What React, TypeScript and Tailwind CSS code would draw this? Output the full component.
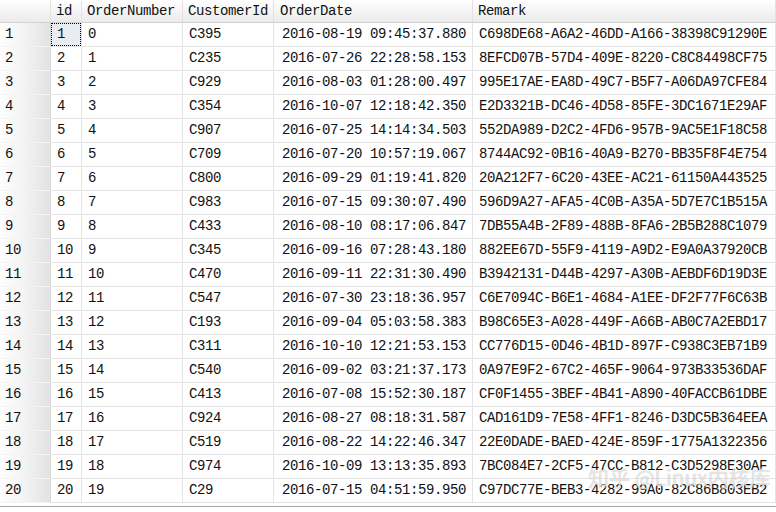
const rows: [string, string, string][] = [
  ['C395', '2016-08-19 09:45:37.880', 'C698DE68-A6A2-46DD-A166-38398C91290E'],
  ['C235', '2016-07-26 22:28:58.153', '8EFCD07B-57D4-409E-8220-C8C84498CF75'],
  ['C929', '2016-08-03 01:28:00.497', '995E17AE-EA8D-49C7-B5F7-A06DA97CFE84'],
  ['C354', '2016-10-07 12:18:42.350', 'E2D3321B-DC46-4D58-85FE-3DC1671E29AF'],
  ['C907', '2016-07-25 14:14:34.503', '552DA989-D2C2-4FD6-957B-9AC5E1F18C58'],
  ['C709', '2016-07-20 10:57:19.067', '8744AC92-0B16-40A9-B270-BB35F8F4E754'],
  ['C800', '2016-09-29 01:19:41.820', '20A212F7-6C20-43EE-AC21-61150A443525'],
  ['C983', '2016-07-15 09:30:07.490', '596D9A27-AFA5-4C0B-A35A-5D7E7C1B515A'],
  ['C433', '2016-08-10 08:17:06.847', '7DB55A4B-2F89-488B-8FA6-2B5B288C1079'],
  ['C345', '2016-09-16 07:28:43.180', '882EE67D-55F9-4119-A9D2-E9A0A37920CB'],
  ['C470', '2016-09-11 22:31:30.490', 'B3942131-D44B-4297-A30B-AEBDF6D19D3E'],
  ['C547', '2016-07-30 23:18:36.957', 'C6E7094C-B6E1-4684-A1EE-DF2F77F6C63B'],
  ['C193', '2016-09-04 05:03:58.383', 'B98C65E3-A028-449F-A66B-AB0C7A2EBD17'],
  ['C311', '2016-10-10 12:21:53.153', 'CC776D15-0D46-4B1D-897F-C938C3EB71B9'],
  ['C540', '2016-09-02 03:21:37.173', '0A97E9F2-67C2-465F-9064-973B33536DAF'],
  ['C413', '2016-07-08 15:52:30.187', 'CF0F1455-3BEF-4B41-A890-40FACCB61DBE'],
  ['C924', '2016-08-27 08:18:31.587', 'CAD161D9-7E58-4FF1-8246-D3DC5B364EEA'],
  ['C519', '2016-08-22 14:22:46.347', '22E0DADE-BAED-424E-859F-1775A1322356'],
  ['C974', '2016-10-09 13:13:35.893', '7BC084E7-2CF5-47CC-B812-C3D5298E30AF'],
  ['C29', '2016-07-15 04:51:59.950', 'C97DC77E-BEB3-4282-99A0-82C86B803EB2'],
];

const cols = 'grid grid-cols-[51px_31px_101px_91px_199px_1fr]';
const headCell =
  'h-[23px] flex items-center pl-[5px] border-r border-b border-r-[#e2e2e2] border-b-[#d2d2d2] bg-gradient-to-b from-white to-[#ebebeb] whitespace-nowrap overflow-hidden';
const cell =
  'h-6 flex items-center pl-[6px] border-r border-b border-[#e4e4e4] whitespace-nowrap overflow-hidden';

export default function App() {
  return (
    <main
      className="relative w-[776px] h-[512px] overflow-hidden bg-white text-[#111] text-[14px] tracking-[-0.4px]"
      style={{ fontFamily: '"Liberation Mono", "DejaVu Sans Mono", monospace' }}
    >
      {/* Header */}
      <div className={cols}>
        <div className={headCell} />
        <div className={headCell}>id</div>
        <div className={headCell}>OrderNumber</div>
        <div className={headCell}>CustomerId</div>
        <div className={`${headCell} pl-[6px]`}>OrderDate</div>
        <div className={headCell}>Remark</div>
      </div>

      {/* Rows */}
      {rows.map(([customer, date, remark], i) => (
        <div key={i} className={cols}>
          <div className="h-6 flex items-center pl-[5px] border-r border-b border-r-[#d8d8d8] border-b-[#f4f4f4] bg-gradient-to-r from-[#fdfdfd] via-[#f3f3f3] to-[#e2e2e2]">
            {i + 1}
          </div>
          {i === 0 ? (
            <div className="h-6 border-r border-b border-[#e4e4e4]">
              <div className="h-full flex items-center pl-[5px] bg-[#e9edf1] border border-dotted border-black">
                1
              </div>
            </div>
          ) : (
            <div className={cell}>{i + 1}</div>
          )}
          <div className={cell}>{i}</div>
          <div className={cell}>{customer}</div>
          <div className={`${cell} pl-[8px]`}>{date}</div>
          <div className={cell}>{remark}</div>
        </div>
      ))}

      <div className="mt-[3px] border-t border-[#a8a8a8]" />

      {/* Watermark */}
      <div
        className="absolute left-[588px] top-[467px] text-[21px] leading-none tracking-normal text-[rgba(240,240,240,0.7)] whitespace-nowrap"
        style={{
          fontFamily: '"Noto Sans CJK SC", sans-serif',
          textShadow: '0 0 1px rgba(140,140,140,0.5)',
        }}
      >
        知乎 @Linux内核库
      </div>
    </main>
  );
}
